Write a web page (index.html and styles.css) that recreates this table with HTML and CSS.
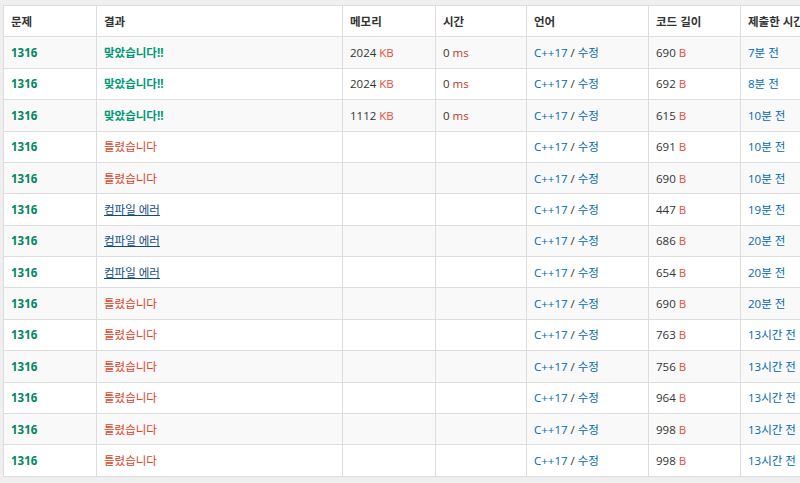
FILE: index.html
```html
<!DOCTYPE html>
<html lang="ko">
<head>
<meta charset="utf-8">
<link rel="stylesheet" href="styles.css">
</head>
<body>
<div class="page">
<table class="status">
<colgroup>
<col class="c1"><col class="c2"><col class="c3"><col class="c4"><col class="c5"><col class="c6"><col class="c7">
</colgroup>
<thead>
<tr><th>문제</th><th>결과</th><th>메모리</th><th>시간</th><th>언어</th><th>코드 길이</th><th>제출한 시간</th></tr>
</thead>
<tbody>
<tr><td class="pid">1316</td><td class="ac">맞았습니다!!</td><td>2024 <span class="u">KB</span></td><td>0 <span class="u2">ms</span></td><td><a class="lk">C++17</a> / <a class="lk">수정</a></td><td>690 <span class="u">B</span></td><td><a class="lk">7분 전</a></td></tr>
<tr><td class="pid">1316</td><td class="ac">맞았습니다!!</td><td>2024 <span class="u">KB</span></td><td>0 <span class="u2">ms</span></td><td><a class="lk">C++17</a> / <a class="lk">수정</a></td><td>692 <span class="u">B</span></td><td><a class="lk">8분 전</a></td></tr>
<tr><td class="pid">1316</td><td class="ac">맞았습니다!!</td><td>1112 <span class="u">KB</span></td><td>0 <span class="u2">ms</span></td><td><a class="lk">C++17</a> / <a class="lk">수정</a></td><td>615 <span class="u">B</span></td><td><a class="lk">10분 전</a></td></tr>
<tr><td class="pid">1316</td><td class="wa">틀렸습니다</td><td></td><td></td><td><a class="lk">C++17</a> / <a class="lk">수정</a></td><td>691 <span class="u">B</span></td><td><a class="lk">10분 전</a></td></tr>
<tr><td class="pid">1316</td><td class="wa">틀렸습니다</td><td></td><td></td><td><a class="lk">C++17</a> / <a class="lk">수정</a></td><td>690 <span class="u">B</span></td><td><a class="lk">10분 전</a></td></tr>
<tr><td class="pid">1316</td><td><a class="ce">컴파일 에러</a></td><td></td><td></td><td><a class="lk">C++17</a> / <a class="lk">수정</a></td><td>447 <span class="u">B</span></td><td><a class="lk">19분 전</a></td></tr>
<tr><td class="pid">1316</td><td><a class="ce">컴파일 에러</a></td><td></td><td></td><td><a class="lk">C++17</a> / <a class="lk">수정</a></td><td>686 <span class="u">B</span></td><td><a class="lk">20분 전</a></td></tr>
<tr><td class="pid">1316</td><td><a class="ce">컴파일 에러</a></td><td></td><td></td><td><a class="lk">C++17</a> / <a class="lk">수정</a></td><td>654 <span class="u">B</span></td><td><a class="lk">20분 전</a></td></tr>
<tr><td class="pid">1316</td><td class="wa">틀렸습니다</td><td></td><td></td><td><a class="lk">C++17</a> / <a class="lk">수정</a></td><td>690 <span class="u">B</span></td><td><a class="lk">20분 전</a></td></tr>
<tr><td class="pid">1316</td><td class="wa">틀렸습니다</td><td></td><td></td><td><a class="lk">C++17</a> / <a class="lk">수정</a></td><td>763 <span class="u">B</span></td><td><a class="lk">13시간 전</a></td></tr>
<tr><td class="pid">1316</td><td class="wa">틀렸습니다</td><td></td><td></td><td><a class="lk">C++17</a> / <a class="lk">수정</a></td><td>756 <span class="u">B</span></td><td><a class="lk">13시간 전</a></td></tr>
<tr><td class="pid">1316</td><td class="wa">틀렸습니다</td><td></td><td></td><td><a class="lk">C++17</a> / <a class="lk">수정</a></td><td>964 <span class="u">B</span></td><td><a class="lk">13시간 전</a></td></tr>
<tr><td class="pid">1316</td><td class="wa">틀렸습니다</td><td></td><td></td><td><a class="lk">C++17</a> / <a class="lk">수정</a></td><td>998 <span class="u">B</span></td><td><a class="lk">13시간 전</a></td></tr>
<tr><td class="pid">1316</td><td class="wa">틀렸습니다</td><td></td><td></td><td><a class="lk">C++17</a> / <a class="lk">수정</a></td><td>998 <span class="u">B</span></td><td><a class="lk">13시간 전</a></td></tr>
</tbody>
</table>
</div>
</body>
</html>
```

FILE: styles.css
```css
html, body {
  margin: 0;
  padding: 0;
  background: #efefef;
  overflow: hidden;
}
.page {
  padding: 5px 0 0 3px;
  width: 900px;
}
.status {
  border-collapse: collapse;
  table-layout: fixed;
  width: 869px;
  background: #fff;
  font-family: "Open Sans", "Noto Sans CJK KR", sans-serif;
  font-size: 11.5px;
  color: #333;
}
.c1 { width: 93px; }
.c2 { width: 246px; }
.c3 { width: 93px; }
.c4 { width: 91px; }
.c5 { width: 122px; }
.c6 { width: 92px; }
.c7 { width: 132px; }
.status th, .status td {
  border: 1px solid #ddd;
  padding: 6.7px 7px;
  line-height: 17px;
  text-align: left;
  white-space: nowrap;
  overflow: hidden;
}
.status th {
  font-weight: bold;
  color: #333;
}
.status tbody tr:nth-child(odd) {
  background: #f9f9f9;
}
.pid {
  font-weight: bold;
  color: #00875f;
}
.ac {
  font-weight: bold;
  color: #009874;
}
.wa {
  color: #dd4124;
}
.ce {
  color: #0f4c81;
  text-decoration: underline;
}
.lk {
  color: #0068b0;
  text-decoration: none;
}
.u {
  color: #e74c3c;
}
.u2 {
  color: #c0392b;
}
```
